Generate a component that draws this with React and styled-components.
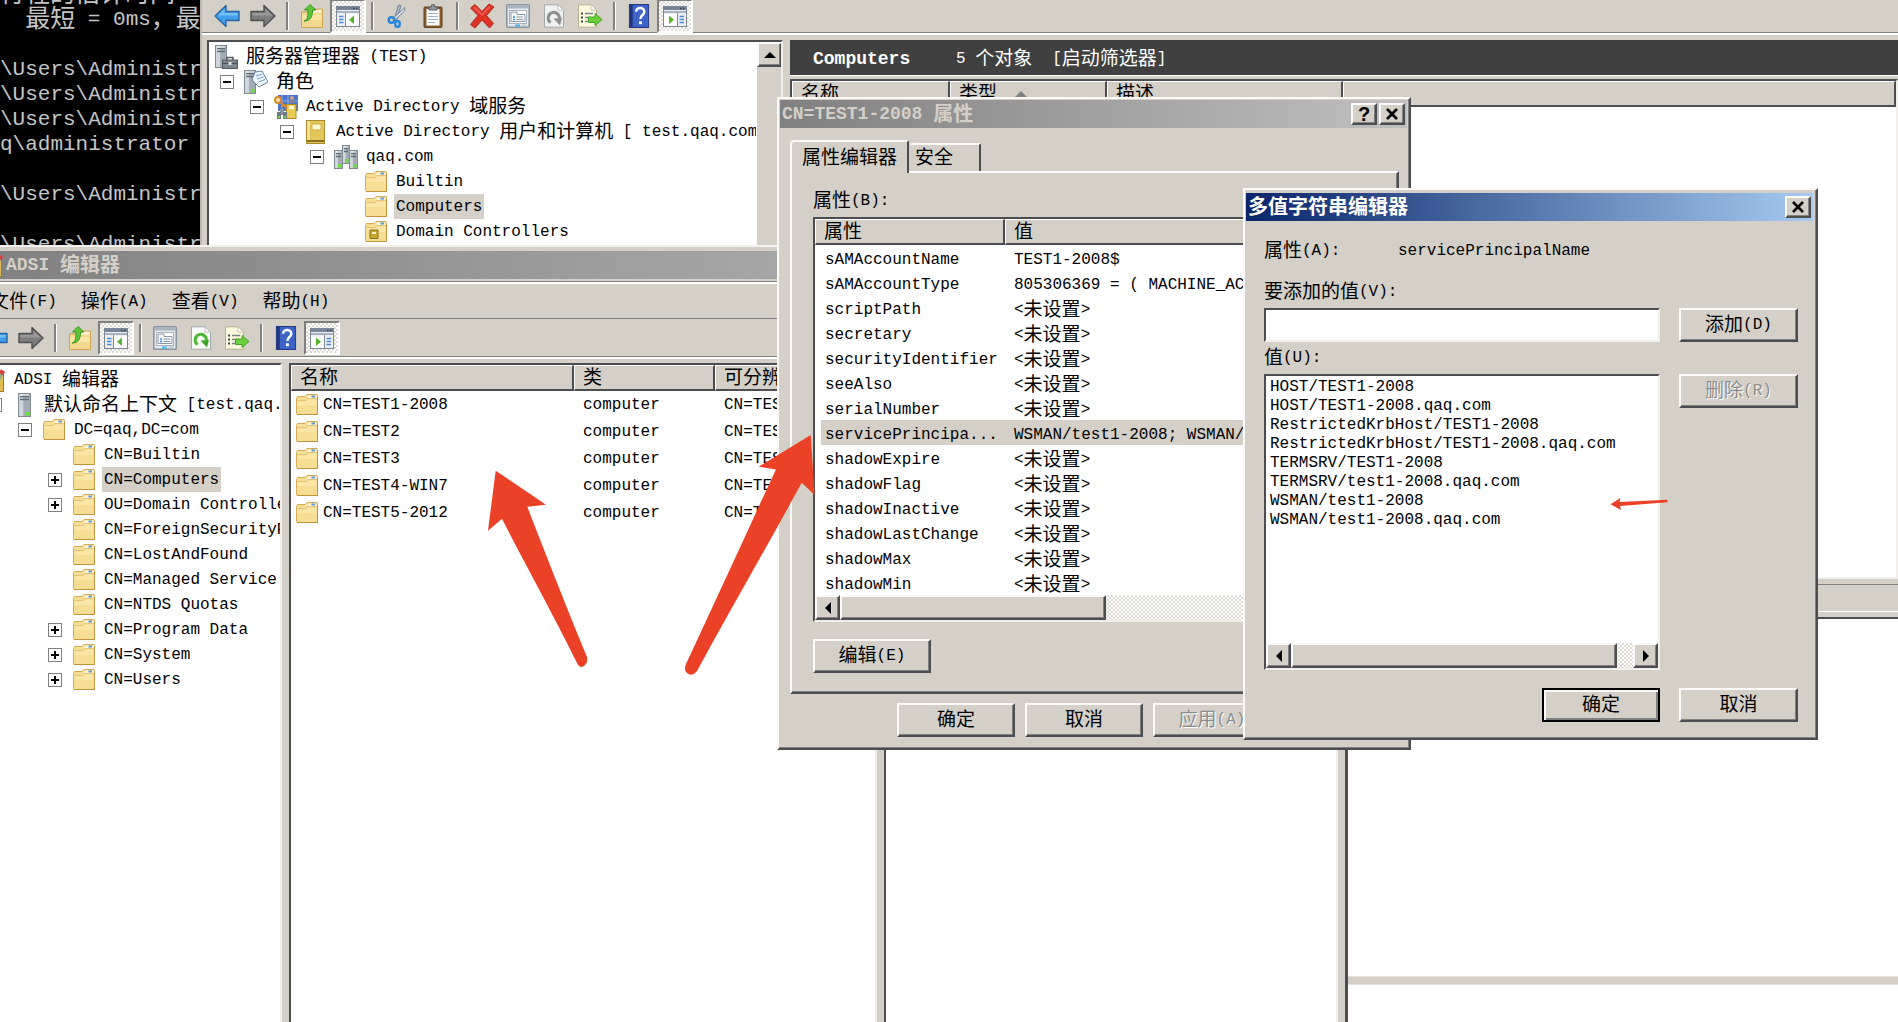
import React from 'react';
import styled, { createGlobalStyle, css } from 'styled-components';

const Colors = {
    FACE: '#d4d0c8',
    LIGHT: '#fbfaf8',
    SHADOW: '#808080',
    DARK: '#4c4d50',
    RED: '#eb4127',
};

const GlobalStyle = createGlobalStyle`
    * {
        box-sizing: border-box;
    }
    body {
        margin: 0;
        background: #fff;
        overflow: hidden;
    }
    body, button, input, select, table {
        font-family: 'Liberation Mono', 'Noto Sans CJK SC', monospace;
        font-size: 16px;
        line-height: 20px;
        color: #000;
    }
`;

const raised = css`
    border: 2px solid;
    border-color: ${Colors.LIGHT} ${Colors.DARK} ${Colors.DARK} ${Colors.LIGHT};
    box-shadow: inset -1px -1px ${Colors.SHADOW};
    background: ${Colors.FACE};
`;

const sunken = css`
    border: 2px solid;
    border-color: ${Colors.DARK} #f1efe9 #f1efe9 ${Colors.DARK};
`;

const checker = css`
    background: repeating-conic-gradient(#fff 0 25%, #dedbd5 0 50%) 0 0 / 4px 4px;
`;

/* ---------- text ---------- */

const Han = styled.span`
    font-size: var(--han, 19px);
    line-height: 0;
    vertical-align: -2px;
`;

// Chinese runs are set larger so that one of them is two Latin cells wide
const Text = ({ children }) => (
    <span>
        {children.split(/([\u3000-\u9fff\uff00-\uffef]+)/).map((part, i) => (
            i % 2 ? <Han key={i}>{part}</Han> : part
        ))}
    </span>
);

/* ---------- icons ---------- */

const Svg = styled.svg`
    display: block;
    flex: none;
    width: ${({ $size }) => $size || 24}px;
    height: ${({ $size }) => $size || 24}px;
`;

const FolderShape = () => (
    <>
        <path d="M1.5 5.5 L2.5 3.5 H10 L12 1.5 H22 L22.5 2.5 V21.5 H2 L1.5 20.5 Z" fill="#f6dd94" stroke="#d3ab57"/>
        <path d="M12.5 2.5 H21.5 V5 H12.5 Z" fill="#fbf3dc"/>
        <path d="M16.5 2.5 H20 V4.5 H16.5 Z" fill="#5a9ddb"/>
        <path d="M2.5 7.5 H11 L13 5.5 H21.5" fill="none" stroke="#e3c27a"/>
        <path d="M2.5 8.5 H11.5 L13.5 6.5 H21.5 V12 H2.5 Z" fill="#fbe6a6"/>
        <path d="M2 21.5 H22.5 V4" fill="none" stroke="#bf9440"/>
    </>
);

const FolderIcon = () => <Svg viewBox="0 0 24 24"><FolderShape/></Svg>;

const OuIcon = () => (
    <Svg viewBox="0 0 24 24">
        <FolderShape/>
        <path d="M6 10 H14 V18.5 H6 Z" fill="#c9a733" stroke="#8d7420"/>
        <path d="M8 12 H12 V14 H8 Z" fill="#f7eebb"/>
    </Svg>
);

const Tower = ({ x, y, w, h }) => (
    <g>
        <rect x={x + 0.5} y={y + 0.5} width={w - 1} height={h - 1} fill="#a2acb6" stroke="#7f8a94"/>
        <rect x={x + 1} y={y + 1} width={w / 3} height={h - 2} fill="#cfd7dd"/>
        <path d={`M${x + 2} ${y + 3.5} H${x + w - 2} M${x + 2} ${y + 6.5} H${x + w - 2}`} stroke="#5f6b75" strokeWidth="1.3"/>
        <path d={`M${x + 2} ${y + 2} H${x + w - 2}`} stroke="#fff"/>
        <rect x={x + w - 5} y={y + h - 5} width="3.5" height="3.5" fill="#6be03a"/>
    </g>
);

const ServerIcon = () => <Svg viewBox="0 0 24 24"><Tower x={6} y={0} w={13} h={24}/></Svg>;

const ServerManagerIcon = () => (
    <Svg viewBox="0 0 24 24">
        <Tower x={1} y={0} w={12} h={23}/>
        <path d="M13 15 V12.5 H19 V15" fill="none" stroke="#555b63" strokeWidth="1.5"/>
        <rect x="8.5" y="15" width="15" height="8.5" fill="#7d858e" stroke="#565c63"/>
        <path d="M9 18.5 H23" stroke="#4a4f55"/>
        <rect x="14.5" y="17" width="3" height="3" fill="#dfe3e6"/>
    </Svg>
);

const RolesIcon = () => (
    <Svg viewBox="0 0 24 24">
        <Tower x={0} y={0} w={12} h={24}/>
        <path d="M11 2 L18 1 L24 12 L15 17 L8 10 Z" fill="#eef5fb" stroke="#6482a0"/>
        <path d="M12 6 L18 4 M13 9 L19.5 7 M14.5 12 L21 9.5" stroke="#6f9fca"/>
    </Svg>
);

const DomainServiceIcon = () => (
    <Svg viewBox="0 0 24 24">
        <rect x="4" y="0" width="20" height="16" fill="#4a74c9"/>
        <path d="M8 0 V16 M14 0 V16 M4 6 H24" stroke="#8fabea"/>
        <path d="M15 8 C15 3 21 3 21 8 Z" fill="#7d838b"/>
        <circle cx="18" cy="3" r="2" fill="#c9a58a"/>
        <rect x="12.5" y="9.5" width="9.5" height="14" fill="#e9cc55" stroke="#b08d22"/>
        <rect x="15" y="11" width="5" height="3" fill="#fffbe0"/>
        <circle cx="4" cy="5" r="3" fill="#fbe3b4" stroke="#d98a2c" strokeWidth="2"/>
        <path d="M6.5 7 L13 12.5 M9.5 10 L8 12" stroke="#d98a2c" strokeWidth="2"/>
        <rect x="6" y="14" width="4" height="6" fill="#8b959e"/>
        <rect x="3" y="17" width="4" height="7" fill="#6f7982"/>
        <rect x="9" y="17" width="4" height="7" fill="#6f7982"/>
        <path d="M4 22 H6 M10 22 H12" stroke="#6be03a" strokeWidth="2"/>
    </Svg>
);

const BookIcon = () => (
    <Svg viewBox="0 0 24 24">
        <rect x="2.5" y="0.5" width="18" height="23" fill="#e3c75b" stroke="#a98a2c"/>
        <rect x="3" y="1" width="3" height="20" fill="#f2e08e"/>
        <rect x="8" y="4" width="9" height="6" fill="#fdf8d4" stroke="#cfae3d"/>
        <path d="M3 21 H20" stroke="#8c7020" strokeWidth="2"/>
    </Svg>
);

const DomainIcon = () => (
    <Svg viewBox="0 0 24 24">
        <Tower x={8} y={0} w={8} h={19}/>
        <Tower x={0} y={5} w={9} h={19}/>
        <Tower x={15} y={5} w={9} h={19}/>
    </Svg>
);

const AdsiIcon = () => (
    <Svg viewBox="0 0 24 24">
        <rect x="3.5" y="5.5" width="18" height="18" fill="#e0bd52" stroke="#9c7a20"/>
        <rect x="7" y="9" width="8" height="5" fill="#fbf5d0"/>
        <path d="M14 15 L20 5" stroke="#8fae8b" strokeWidth="4"/>
        <path d="M19 6 L21 2.5" stroke="#d9413c" strokeWidth="5"/>
        <path d="M12.5 18 L14 13.5 L16.5 15 Z" fill="#53402a"/>
    </Svg>
);

const ArrowShape = ({ fill, stroke, shine }) => (
    <>
        <path d="M1 12.5 L12 2 V8 H25 V17 H12 V23 Z" fill={fill} stroke={stroke} strokeWidth="1.4" strokeLinejoin="round"/>
        <path d="M3.5 12 L10.5 5.5 V9.5 H23.5 V12 Z" fill={shine}/>
    </>
);

const BackIcon = () => (
    <Svg viewBox="0 0 26 25" $size={26}><ArrowShape fill="#3f9fe8" stroke="#2a64a5" shine="#74c0f6"/></Svg>
);

const ForwardIcon = () => (
    <Svg viewBox="0 0 26 25" $size={26}>
        <g transform="matrix(-1 0 0 1 26 0)"><ArrowShape fill="#7d7d7d" stroke="#505050" shine="#999"/></g>
    </Svg>
);

const FolderUpIcon = () => (
    <Svg viewBox="0 0 24 24">
        <path d="M1.5 8 H9 L12 5 H22.5 V23.5 H1.5 Z" fill="#f3d98d" stroke="#cfa552"/>
        <path d="M15 6 H21.5 V8.5 H13 Z" fill="#fdf6dd"/>
        <path d="M2.5 11 H21.5 V16 H2.5 Z" fill="#fbe6a6"/>
        <path d="M4 17 C8 16 8 11 8 6 H4.5 L10 0.5 L16 6 H12.5 C12.5 12 11 17 4 17 Z" fill="#5fc63b" stroke="#3a9422"/>
    </Svg>
);

const ViewIcon = ({ flip }) => (
    <Svg viewBox="0 0 24 24">
        <g transform={flip ? 'matrix(-1 0 0 1 24 0)' : undefined}>
            <rect x="0.5" y="2.5" width="23" height="20" fill="#eceff2" stroke="#7b8794"/>
            <rect x="1" y="3" width="22" height="3" fill="#76839a"/>
            <path d="M1 8 H23" stroke="#a9b2be" strokeWidth="2"/>
            <path d="M9.5 9 V22" stroke="#7b8794"/>
            <rect x="10" y="10" width="13" height="12" fill="#fff"/>
            <path d="M3 12.5 H7.5 M3 15.5 H7.5 M3 18.5 H7.5" stroke="#4b8ad0" strokeWidth="1.5"/>
            <path d="M18 11.5 V20 L13 15.8 Z" fill="#52b52b"/>
        </g>
        <path d="M17 4.5 H18.5 M20 4.5 H21.5" stroke="#3a4450" strokeWidth="1.5"/>
    </Svg>
);

const CutIcon = () => (
    <Svg viewBox="0 0 24 24">
        <path d="M13.5 1 L16 1.5 L12.5 15 L9.5 14 Z" fill="#a9b6c4" stroke="#64758a" strokeWidth="0.8"/>
        <path d="M20 3.5 L19.5 7 L10 16 L8.5 14 Z" fill="#dbe2ea" stroke="#64758a" strokeWidth="0.8"/>
        <circle cx="6.5" cy="16" r="2.8" fill="none" stroke="#2a86d8" strokeWidth="2.4"/>
        <ellipse cx="12.5" cy="20" rx="2.3" ry="3" fill="none" stroke="#2a86d8" strokeWidth="2.4"/>
    </Svg>
);

const PasteIcon = () => (
    <Svg viewBox="0 0 24 24">
        <rect x="3" y="3" width="18" height="20.5" rx="1" fill="#8a5a2b" stroke="#65401c"/>
        <rect x="5.5" y="5" width="13" height="16.5" fill="#fbfcfe"/>
        <path d="M7 9.5 H17 M7 12.5 H17 M7 15.5 H17 M7 18.5 H14" stroke="#9fb3cc"/>
        <path d="M8 6 V3 H10.5 V0.8 H13.5 V3 H16 V6 Z" fill="#8f969e" stroke="#5c636b"/>
    </Svg>
);

const DeleteIcon = () => (
    <Svg viewBox="0 0 26 26" $size={26}>
        <path d="M1.5 5 L6 1.5 L13 8.5 L20 1 L25 4 L17.5 12.5 L24.5 20.5 L20.5 25 L13 17 L6 25 L1.5 21.5 L9 12.5 Z" fill="#dd3327" stroke="#b5251c"/>
        <path d="M4 5 L6 3.5 L13 10.5 L20 3 L22 4 L13 13 Z" fill="#e9594c"/>
    </Svg>
);

const PropertiesIcon = () => (
    <Svg viewBox="0 0 24 24">
        <rect x="0.8" y="0.8" width="22.4" height="22.4" rx="1" fill="#e4e9ed" stroke="#86929e" strokeWidth="1.5"/>
        <rect x="1.5" y="1.5" width="21" height="3" fill="#a9b4bf"/>
        <rect x="3.5" y="6.5" width="17" height="13" fill="#fff" stroke="#a8b3bd"/>
        <path d="M5 8 H11 V10.5 H19 V17.5 H5 Z" fill="#f4f7fa" stroke="#8d99a6"/>
        <path d="M7 13 H9 M7 15.5 H9" stroke="#3d8ed4" strokeWidth="1.4"/>
        <path d="M10.5 13 H17 M10.5 15.5 H17" stroke="#8d99a6"/>
        <rect x="9" y="20.5" width="5" height="2" fill="#45b6ef"/>
        <rect x="15.5" y="20.5" width="5" height="2" fill="#bcc6cf"/>
    </Svg>
);

const RefreshIcon = ({ disabled }) => (
    <Svg viewBox="0 0 24 24">
        <path d="M2.5 0.8 H16 L21.5 6 V23.2 H2.5 Z" fill={disabled ? '#f0f0ee' : '#fafcf8'} stroke="#a3a8ad"/>
        <path d="M16 0.8 V6 H21.5 Z" fill="#fff" stroke="#b9bdc1"/>
        <path d="M8.5 18.5 A5.6 5.6 0 1 1 16.5 17" fill="none" stroke={disabled ? '#8f8f8f' : '#4db832'} strokeWidth="3.2"/>
        <path d="M11.5 14.5 L20 14 L18 21.5 Z" fill={disabled ? '#8f8f8f' : '#3ca524'}/>
    </Svg>
);

const ExportIcon = () => (
    <Svg viewBox="0 0 26 24" $size={26}>
        <path d="M1.5 0.8 H14 L19.5 6 V23.2 H1.5 Z" fill="#fbf9dc" stroke="#b5b08f"/>
        <path d="M14 0.8 V6 H19.5 Z" fill="#fff" stroke="#c9c5ab"/>
        <path d="M4 9.5 H6 M4 13.5 H6 M4 17.5 H6" stroke="#3b4656" strokeWidth="2"/>
        <path d="M8 9.5 H16 M8 13.5 H13 M8 17.5 H13" stroke="#7a828c" strokeWidth="1.5"/>
        <path d="M11.5 13 H18 V9.5 L25 15.5 L18 21.5 V18.5 H11.5 Z" fill="#6bd03f" stroke="#46a222"/>
    </Svg>
);

const HelpIcon = () => (
    <Svg viewBox="0 0 24 25">
        <rect x="2" y="0.5" width="20" height="24" fill="#3e62c8" stroke="#20377f"/>
        <rect x="2.5" y="1" width="3" height="23" fill="#20377f"/>
        <path d="M9 8 C9 3 17.5 3 17.5 8 C17.5 11.5 13.5 11.5 13.5 15.5" fill="none" stroke="#fff" strokeWidth="2.6"/>
        <rect x="12" y="18" width="3" height="3" fill="#fff"/>
    </Svg>
);

const CloseGlyph = () => (
    <Svg viewBox="0 0 16 16" $size={16}>
        <path d="M3 3 L13 13 M13 3 L3 13" stroke="#000" strokeWidth="2.6"/>
    </Svg>
);

const Triangle = ({ d, fill }) => (
    <Svg viewBox="0 0 12 12" $size={12}><path d={d} fill={fill || '#000'}/></Svg>
);

const LEFT = 'M9 0 V12 L3 6 Z';
const RIGHT = 'M3 0 V12 L9 6 Z';
const UP = 'M0 9 H12 L6 3 Z';

/* ---------- shared controls ---------- */

const Desktop = styled.main`
    position: relative;
    height: 100vh;
    background: #fff;
    overflow: hidden;
`;

const Window = styled.section`
    position: absolute;
    display: flex;
    flex-direction: column;
    background: ${Colors.FACE};
`;

const TitleBar = styled.header`
    --han: 20px;
    display: flex;
    align-items: center;
    gap: 2px;
    height: 28px;
    padding: 0 2px 0 ${({ $pad }) => $pad || 2}px;
    font-size: 18px;
    font-weight: bold;
    white-space: nowrap;
    color: ${({ $active }) => $active ? '#fff' : Colors.FACE};
    background: ${({ $active }) => $active
        ? 'linear-gradient(90deg, #0a246a, #a6caf0)'
        : 'linear-gradient(90deg, #808080, #c0c0c0)'};
`;

const TitleText = styled.h2`
    flex: 1;
    margin: 0;
    font-size: inherit;
`;

const CaptionButton = styled.button`
    ${raised}
    display: flex;
    align-items: center;
    justify-content: center;
    width: 26px;
    height: 22px;
    padding: 0;
    font-family: 'Liberation Sans', sans-serif;
    font-size: 20px;
    font-weight: bold;
`;

const Button = styled.button`
    ${raised}
    width: ${({ $wide }) => $wide || 118}px;
    height: 34px;
    padding: 0;
    white-space: nowrap;
    ${({ $primary }) => $primary && css`
        outline: 1px solid #000;
        outline-offset: -1px;
        border-color: #000;
        box-shadow: inset 2px 2px ${Colors.LIGHT}, inset -2px -2px ${Colors.SHADOW};
    `}
    &:disabled {
        color: #8c8c8c;
        text-shadow: 1px 1px #fff;
    }
`;

const ToolbarRow = styled.div`
    display: flex;
    align-items: center;
    height: ${({ $height }) => $height}px;
    padding-left: 7px;
    border-bottom: 1px solid ${Colors.SHADOW};
`;

const ToolButton = styled.button`
    display: flex;
    align-items: center;
    justify-content: center;
    flex: none;
    width: 36px;
    height: 34px;
    padding: 0;
    border: 0;
    background: none;
    ${({ $pressed }) => $pressed && css`
        ${checker}
        border: 2px solid;
        border-color: ${Colors.SHADOW} #fff #fff ${Colors.SHADOW};
    `}
`;

const ToolSeparator = styled.span`
    flex: none;
    width: 3px;
    height: 28px;
    margin: 0 5px;
    border-left: 1px solid ${Colors.SHADOW};
    border-right: 1px solid #fff;
    background: ${Colors.SHADOW};
`;

const Toolbar = ({ items, height }) => (
    <ToolbarRow $height={height} role="toolbar">
        {items.map((item, i) => item ? (
            <ToolButton key={i} $pressed={item.pressed} aria-label={item.label}>{item.icon}</ToolButton>
        ) : <ToolSeparator key={i}/>)}
    </ToolbarRow>
);

const Pane = styled.div`
    ${sunken}
    display: flex;
    flex-direction: column;
    flex: ${({ $flex }) => $flex || '1'};
    min-width: 0;
    background: #fff;
    overflow: hidden;
`;

const ScrollRow = styled.div`
    display: flex;
    height: 25px;
    flex: none;
    ${checker}
`;

const ScrollButton = styled.button`
    ${raised}
    display: flex;
    align-items: center;
    justify-content: center;
    flex: none;
    width: 25px;
    height: 25px;
    padding: 0;
`;

const Thumb = styled.div`
    ${raised}
    width: ${({ $length }) => $length};
`;

const Spacer = styled.span`
    flex: 1;
`;

/* ---------- tree ---------- */

const TreeList = styled.ul`
    flex: 1;
    margin: 0;
    padding: 2px 0 0;
    list-style: none;
    overflow: hidden;
`;

const TreeRow = styled.li`
    display: flex;
    align-items: center;
    height: 25px;
    padding-left: ${({ $level }) => $level ? $level * 30 - 19 : 5}px;
    white-space: nowrap;
`;

const ExpanderSlot = styled.span`
    flex: none;
    width: 24px;
`;

const Expander = styled.button`
    display: block;
    width: 14px;
    height: 14px;
    padding: 0;
    border: 1px solid ${Colors.SHADOW};
    background:
        linear-gradient(#000, #000) center / 8px 2px no-repeat,
        ${({ $open }) => $open ? '' : 'linear-gradient(#000, #000) center / 2px 8px no-repeat,'}
        #fff;
`;

const TreeLabel = styled.span`
    height: 25px;
    margin-left: 6px;
    padding: 1px 2px 0;
    line-height: 24px;
    background: ${({ $selected }) => $selected ? Colors.FACE : 'none'};
`;

const Tree = ({ nodes }) => (
    <TreeList>
        {nodes.map(([level, label, icon, state, selected]) => (
            <TreeRow key={label} $level={level}>
                {level > 0 && (
                    <ExpanderSlot>
                        {state && <Expander $open={state === 'open'} aria-label={state}/>}
                    </ExpanderSlot>
                )}
                {icon}
                <TreeLabel $selected={selected}><Text>{label}</Text></TreeLabel>
            </TreeRow>
        ))}
    </TreeList>
);

/* ---------- tables ---------- */

const Table = styled.table`
    width: 100%;
    table-layout: fixed;
    border-spacing: 0;
    white-space: nowrap;
`;

const Th = styled.th`
    width: ${({ $width }) => $width ? `${$width}px` : 'auto'};
    height: 26px;
    padding: 0 0 0 8px;
    border-style: solid;
    border-width: 1px 2px 2px 1px;
    border-color: #fff ${Colors.DARK} ${Colors.DARK} #fff;
    background: ${Colors.FACE};
    font-weight: normal;
    text-align: left;
    overflow: hidden;
`;

const Td = styled.td`
    height: ${({ $height }) => $height}px;
    padding: ${({ $drop }) => $drop || 0}px 0 0 9px;
    overflow: hidden;
`;

const NameCell = styled.div`
    display: flex;
    align-items: center;
    gap: 4px;
    margin-left: -5px;
`;

const SortHead = styled.span`
    display: flex;
    align-items: center;
    gap: 18px;
`;

/* ---------- console ---------- */

const Console = styled.pre`
    --han: 25px;
    position: absolute;
    top: 0;
    left: 0;
    width: 200px;
    height: 250px;
    margin: 0;
    background: #000;
    color: #c6c6c6;
    font-family: 'Liberation Mono', 'Noto Sans CJK SC', monospace;
    font-size: 21px;
    line-height: 25px;
    overflow: hidden;
`;

const ConsoleText = styled.div`
    margin-top: -18px;
`;

const CONSOLE_LINES = [
    '行程的估计时间',
    '  最短 = 0ms，最长',
    '',
    '\\Users\\Administrator',
    '\\Users\\Administrator',
    '\\Users\\Administrator',
    'q\\administrator',
    '',
    '\\Users\\Administrator',
    '',
    '\\Users\\Administrator',
];

/* ---------- server manager ---------- */

const ManagerWindow = styled(Window)`
    top: 0;
    left: 200px;
    right: 0;
    height: 619px;
    border-left: 2px solid #bdb9b1;
    border-bottom: 2px solid ${Colors.DARK};
`;

const ManagerBody = styled.div`
    display: flex;
    flex: 1;
    gap: 7px;
    padding: 5px 0 0 5px;
    border-top: 2px solid #fff;
    min-height: 0;
`;

const TreePane = styled(Pane)`
    flex-direction: row;
`;

const VerticalScroll = styled.div`
    width: 25px;
    background: ${Colors.FACE};
    border-left: 1px solid #fff;
`;

const ResultSide = styled.div`
    display: flex;
    flex-direction: column;
    flex: 1;
    min-width: 0;
`;

const Banner = styled.div`
    display: flex;
    align-items: center;
    height: 36px;
    margin-bottom: 3px;
    padding: 2px 0 0 23px;
    background: #404040;
    border-bottom: 1px solid #fff;
    color: #fff;
    white-space: nowrap;
    & strong {
        width: 143px;
        font-size: 18px;
    }
    & span + span {
        margin-left: 20px;
    }
`;

const StatusBar = styled.footer`
    height: 28px;
    margin: 5px 0;
    border-top: 1px solid ${Colors.SHADOW};
    border-bottom: 1px solid #fff;
`;

const MANAGER_TOOLS = [
    { label: '后退', icon: <BackIcon/> },
    { label: '前进', icon: <ForwardIcon/> },
    null,
    { label: '上一级', icon: <FolderUpIcon/> },
    { label: '显示/隐藏控制台树', icon: <ViewIcon/>, pressed: true },
    null,
    { label: '剪切', icon: <CutIcon/> },
    { label: '粘贴', icon: <PasteIcon/> },
    null,
    { label: '删除', icon: <DeleteIcon/> },
    { label: '属性', icon: <PropertiesIcon/> },
    { label: '刷新', icon: <RefreshIcon disabled/> },
    { label: '导出列表', icon: <ExportIcon/> },
    null,
    { label: '帮助', icon: <HelpIcon/> },
    { label: '显示/隐藏操作窗格', icon: <ViewIcon flip/>, pressed: true },
];

const MANAGER_TREE = [
    [0, '服务器管理器 (TEST)', <ServerManagerIcon/>],
    [1, '角色', <RolesIcon/>, 'open'],
    [2, 'Active Directory 域服务', <DomainServiceIcon/>, 'open'],
    [3, 'Active Directory 用户和计算机 [ test.qaq.com', <BookIcon/>, 'open'],
    [4, 'qaq.com', <DomainIcon/>, 'open'],
    [5, 'Builtin', <FolderIcon/>],
    [5, 'Computers', <FolderIcon/>, null, true],
    [5, 'Domain Controllers', <OuIcon/>],
];

const ServerManager = () => (
    <ManagerWindow>
        <Toolbar items={MANAGER_TOOLS} height={33}/>
        <ManagerBody>
            <TreePane $flex="0 0 576px">
                <Tree nodes={MANAGER_TREE}/>
                <VerticalScroll>
                    <ScrollButton aria-label="向上滚动"><Triangle d={UP}/></ScrollButton>
                </VerticalScroll>
            </TreePane>
            <ResultSide>
                <Banner>
                    <strong>Computers</strong>
                    <Text>5 个对象</Text>
                    <Text>[启动筛选器]</Text>
                </Banner>
                <Pane>
                    <Table>
                        <thead>
                            <tr>
                                <Th $width={158}><Text>名称</Text></Th>
                                <Th $width={157}><SortHead><Text>类型</Text><Triangle d={UP} fill="#808080"/></SortHead></Th>
                                <Th $width={236}><Text>描述</Text></Th>
                                <Th/>
                            </tr>
                        </thead>
                    </Table>
                </Pane>
                <StatusBar/>
            </ResultSide>
        </ManagerBody>
    </ManagerWindow>
);

/* ---------- ADSI edit ---------- */

const AdsiWindow = styled(Window)`
    top: 245px;
    left: -32px;
    bottom: -8px;
    width: 1380px;
    padding: 4px 0 0 2px;
    border-top: 2px solid #f4f2ee;
    border-right: 3px solid ${Colors.DARK};
`;

const MenuBar = styled.nav`
    display: flex;
    align-items: center;
    gap: 24px;
    height: 38px;
    margin-top: 2px;
    padding: 4px 0 0 20px;
    border-top: 1px solid ${Colors.SHADOW};
    border-bottom: 1px solid ${Colors.SHADOW};
    box-shadow: inset 0 2px #fff;
`;

const MenuButton = styled.button`
    padding: 0;
    border: 0;
    background: none;
`;

const AdsiBody = styled.div`
    display: flex;
    flex: 1;
    gap: 7px;
    padding: 4px 7px 0 5px;
    border-top: 2px solid #fff;
    min-height: 0;
`;

const ADSI_TOOLS = [
    { label: '后退', icon: <BackIcon/> },
    { label: '前进', icon: <ForwardIcon/> },
    null,
    { label: '上一级', icon: <FolderUpIcon/> },
    { label: '显示/隐藏控制台树', icon: <ViewIcon/>, pressed: true },
    null,
    { label: '属性', icon: <PropertiesIcon/> },
    { label: '刷新', icon: <RefreshIcon/> },
    { label: '导出列表', icon: <ExportIcon/> },
    null,
    { label: '帮助', icon: <HelpIcon/> },
    { label: '显示/隐藏操作窗格', icon: <ViewIcon flip/>, pressed: true },
];

const ADSI_TREE = [
    [0, 'ADSI 编辑器', <AdsiIcon/>],
    [1, '默认命名上下文 [test.qaq.', <ServerIcon/>, 'open'],
    [2, 'DC=qaq,DC=com', <FolderIcon/>, 'open'],
    [3, 'CN=Builtin', <FolderIcon/>],
    [3, 'CN=Computers', <FolderIcon/>, 'closed', true],
    [3, 'OU=Domain Controllers', <FolderIcon/>, 'closed'],
    [3, 'CN=ForeignSecurityPrincipals', <FolderIcon/>],
    [3, 'CN=LostAndFound', <FolderIcon/>],
    [3, 'CN=Managed Service', <FolderIcon/>],
    [3, 'CN=NTDS Quotas', <FolderIcon/>],
    [3, 'CN=Program Data', <FolderIcon/>, 'closed'],
    [3, 'CN=System', <FolderIcon/>, 'closed'],
    [3, 'CN=Users', <FolderIcon/>, 'closed'],
];

const COMPUTERS = ['CN=TEST1-2008', 'CN=TEST2', 'CN=TEST3', 'CN=TEST4-WIN7', 'CN=TEST5-2012'];

const AdsiEdit = () => (
    <AdsiWindow>
        <TitleBar $pad={10}>
            <AdsiIcon/>
            <TitleText><Text>ADSI 编辑器</Text></TitleText>
        </TitleBar>
        <MenuBar>
            {['文件(F)', '操作(A)', '查看(V)', '帮助(H)'].map(name => (
                <MenuButton key={name}><Text>{name}</Text></MenuButton>
            ))}
        </MenuBar>
        <Toolbar items={ADSI_TOOLS} height={38}/>
        <AdsiBody>
            <Pane $flex="0 0 307px"><Tree nodes={ADSI_TREE}/></Pane>
            <Pane>
                <Table>
                    <thead>
                        <tr>
                            <Th $width={283}><Text>名称</Text></Th>
                            <Th $width={141}><Text>类</Text></Th>
                            <Th><Text>可分辨名称</Text></Th>
                        </tr>
                    </thead>
                    <tbody>
                        {COMPUTERS.map(name => (
                            <tr key={name}>
                                <Td $height={27}><NameCell><FolderIcon/>{name}</NameCell></Td>
                                <Td>computer</Td>
                                <Td>{name}</Td>
                            </tr>
                        ))}
                    </tbody>
                </Table>
            </Pane>
            <Pane $flex="0 0 454px"/>
        </AdsiBody>
    </AdsiWindow>
);

/* ---------- object properties ---------- */

const PropertiesWindow = styled(Window)`
    ${raised}
    top: 97px;
    left: 777px;
    width: 634px;
    padding: 1px 2px 0 1px;
`;

const PropertiesBody = styled.div`
    padding: 12px 8px 11px 10px;
`;

const Tabs = styled.div`
    display: flex;
    align-items: flex-end;
    height: 31px;
`;

const Tab = styled.button`
    height: ${({ $active }) => $active ? 33 : 28}px;
    margin-bottom: ${({ $active }) => $active ? -2 : 0}px;
    padding: 0 ${({ $active }) => $active ? 10 : 26}px 0 ${({ $active }) => $active ? 10 : 4}px;
    border: 2px solid;
    border-color: ${Colors.LIGHT} ${Colors.DARK} transparent ${({ $active }) => $active ? Colors.LIGHT : 'transparent'};
    border-bottom-width: 0;
    border-radius: 4px 2px 0 0;
    background: ${Colors.FACE};
    z-index: 1;
`;

const TabPanel = styled.div`
    ${raised}
    padding: 17px 13px 19px 21px;
`;

const Label = styled.label`
    display: block;
    height: 22px;
    line-height: 22px;
    white-space: nowrap;
`;

const AttributeList = styled(Pane)`
    margin: 5px 0 17px;
`;

const AttributeRows = styled.div`
    height: 376px;
    overflow: hidden;
`;

const AttributeRow = styled.tr`
    background: ${({ $selected }) => $selected ? Colors.FACE : '#fff'};
    & td:first-child {
        padding-left: 4px;
        border-left: 6px solid #fff;
    }
`;

const ButtonRow = styled.div`
    display: flex;
    gap: 10px;
    padding: 9px 0 0 107px;
    overflow: hidden;
`;

const ATTRIBUTES = [
    ['sAMAccountName', 'TEST1-2008$'],
    ['sAMAccountType', '805306369 = ( MACHINE_ACCOUNT )'],
    ['scriptPath', '<未设置>'],
    ['secretary', '<未设置>'],
    ['securityIdentifier', '<未设置>'],
    ['seeAlso', '<未设置>'],
    ['serialNumber', '<未设置>'],
    ['servicePrincipa...', 'WSMAN/test1-2008; WSMAN/test1-2008.qaq.com'],
    ['shadowExpire', '<未设置>'],
    ['shadowFlag', '<未设置>'],
    ['shadowInactive', '<未设置>'],
    ['shadowLastChange', '<未设置>'],
    ['shadowMax', '<未设置>'],
    ['shadowMin', '<未设置>'],
];

const PropertiesDialog = () => (
    <PropertiesWindow role="dialog">
        <TitleBar>
            <TitleText><Text>CN=TEST1-2008 属性</Text></TitleText>
            <CaptionButton aria-label="帮助">?</CaptionButton>
            <CaptionButton aria-label="关闭"><CloseGlyph/></CaptionButton>
        </TitleBar>
        <PropertiesBody>
            <Tabs role="tablist">
                <Tab $active role="tab" aria-selected="true"><Text>属性编辑器</Text></Tab>
                <Tab role="tab"><Text>安全</Text></Tab>
            </Tabs>
            <TabPanel>
                <Label as="div" id="attributes"><Text>属性(B):</Text></Label>
                <AttributeList>
                    <AttributeRows>
                        <Table aria-labelledby="attributes">
                            <thead>
                                <tr>
                                    <Th $width={190}><Text>属性</Text></Th>
                                    <Th><Text>值</Text></Th>
                                </tr>
                            </thead>
                            <tbody>
                                {ATTRIBUTES.map(([name, value]) => (
                                    <AttributeRow key={name} $selected={name.startsWith('service')}>
                                        <Td $height={25} $drop={4}>{name}</Td>
                                        <Td $drop={4}><Text>{value}</Text></Td>
                                    </AttributeRow>
                                ))}
                            </tbody>
                        </Table>
                    </AttributeRows>
                    <ScrollRow>
                        <ScrollButton aria-label="向左滚动"><Triangle d={LEFT}/></ScrollButton>
                        <Thumb $length="266px"/>
                        <Spacer/>
                        <ScrollButton aria-label="向右滚动"><Triangle d={RIGHT}/></ScrollButton>
                    </ScrollRow>
                </AttributeList>
                <Button><Text>编辑(E)</Text></Button>
            </TabPanel>
            <ButtonRow>
                <Button><Text>确定</Text></Button>
                <Button><Text>取消</Text></Button>
                <Button disabled><Text>应用(A)</Text></Button>
            </ButtonRow>
        </PropertiesBody>
    </PropertiesWindow>
);

/* ---------- multi-valued string editor ---------- */

const EditorWindow = styled(Window)`
    ${raised}
    top: 188px;
    left: 1243px;
    width: 575px;
    padding: 3px 3px 0 1px;
`;

const EditorForm = styled.form`
    display: grid;
    grid-template-columns: 1fr 119px;
    gap: 5px 19px;
    align-items: start;
    padding: 18px 15px 16px 18px;
    & > label {
        grid-column: span 2;
    }
`;

const AttributeLine = styled.div`
    grid-column: span 2;
    display: flex;
    align-items: center;
    height: 24px;
    margin-bottom: 13px;
`;

const AttributeCaption = styled.div`
    flex: none;
    width: 134px;
`;

const ValueInput = styled.input`
    ${sunken}
    width: 100%;
    height: 34px;
    padding: 0 4px;
    background: #fff;
    outline: none;
`;

const ValueBox = styled(Pane)`
    height: 296px;
`;

const ValueSelect = styled.select`
    flex: 1;
    width: 100%;
    padding: 2px 0 0;
    border: 0;
    background: #fff;
    overflow: hidden;
    outline: none;
    & option {
        min-height: 0;
        height: 19px;
        padding: 0 4px;
        line-height: 19px;
    }
`;

const ConfirmCell = styled.div`
    display: flex;
    justify-content: flex-end;
    margin-top: 13px;
    & + button {
        margin-top: 13px;
    }
`;

const VALUES = [
    'HOST/TEST1-2008',
    'HOST/TEST1-2008.qaq.com',
    'RestrictedKrbHost/TEST1-2008',
    'RestrictedKrbHost/TEST1-2008.qaq.com',
    'TERMSRV/TEST1-2008',
    'TERMSRV/test1-2008.qaq.com',
    'WSMAN/test1-2008',
    'WSMAN/test1-2008.qaq.com',
];

const StringEditor = () => (
    <EditorWindow role="dialog">
        <TitleBar $active>
            <TitleText><Text>多值字符串编辑器</Text></TitleText>
            <CaptionButton aria-label="关闭"><CloseGlyph/></CaptionButton>
        </TitleBar>
        <EditorForm onSubmit={e => e.preventDefault()}>
            <AttributeLine>
                <AttributeCaption><Text>属性(A):</Text></AttributeCaption>
                servicePrincipalName
            </AttributeLine>
            <Label htmlFor="new-value"><Text>要添加的值(V):</Text></Label>
            <ValueInput id="new-value" type="text"/>
            <Button type="button" $wide={119}><Text>添加(D)</Text></Button>
            <Label htmlFor="values"><Text>值(U):</Text></Label>
            <ValueBox>
                <ValueSelect id="values" size={8} multiple>
                    {VALUES.map(value => <option key={value}>{value}</option>)}
                </ValueSelect>
                <ScrollRow>
                    <ScrollButton type="button" aria-label="向左滚动"><Triangle d={LEFT}/></ScrollButton>
                    <Thumb $length="326px"/>
                    <Spacer/>
                    <ScrollButton type="button" aria-label="向右滚动"><Triangle d={RIGHT}/></ScrollButton>
                </ScrollRow>
            </ValueBox>
            <Button type="button" $wide={119} disabled><Text>删除(R)</Text></Button>
            <ConfirmCell>
                <Button $primary><Text>确定</Text></Button>
            </ConfirmCell>
            <Button type="button" $wide={119}><Text>取消</Text></Button>
        </EditorForm>
    </EditorWindow>
);

/* ---------- backdrop and arrows ---------- */

const BackdropBar = styled.div`
    position: absolute;
    top: 976px;
    left: 1348px;
    right: 0;
    height: 9px;
    background: ${Colors.FACE};
    border-top: 1px solid #e6e3dd;
    border-bottom: 1px solid #e6e3dd;
`;

const Annotations = styled.svg`
    position: absolute;
    top: 0;
    left: 0;
    width: 100%;
    height: 100%;
    pointer-events: none;
    fill: ${Colors.RED};
`;

export default function App() {
    return (
        <>
            <GlobalStyle/>
            <Desktop>
                <BackdropBar/>
                <Console>
                    <ConsoleText><Text>{CONSOLE_LINES.join('\n')}</Text></ConsoleText>
                </Console>
                <ServerManager/>
                <AdsiEdit/>
                <PropertiesDialog/>
                <StringEditor/>
                <Annotations aria-hidden="true">
                    <path d="M495.7 470.7 L546 504.7 L527.3 506.7 C544 550 566 606 587 657 Q588.5 664 582 667 Q578.5 667 576.5 662 C552 612 526 566 502 518.7 L488 530.7 Z"/>
                    <path d="M810.7 435 L814.7 495 L801.7 482.7 C768 545 730 610 697 671 Q691 678 686 672 Q684 669 686 664 C716 600 746 534 776 469.5 L758.7 466.7 Z"/>
                    <path d="M1610.5 504.3 L1620.3 498 L1619.5 502 L1667 499.7 Q1668.5 501 1667 502.3 L1620 506 L1621 510 Z"/>
                </Annotations>
            </Desktop>
        </>
    );
}
